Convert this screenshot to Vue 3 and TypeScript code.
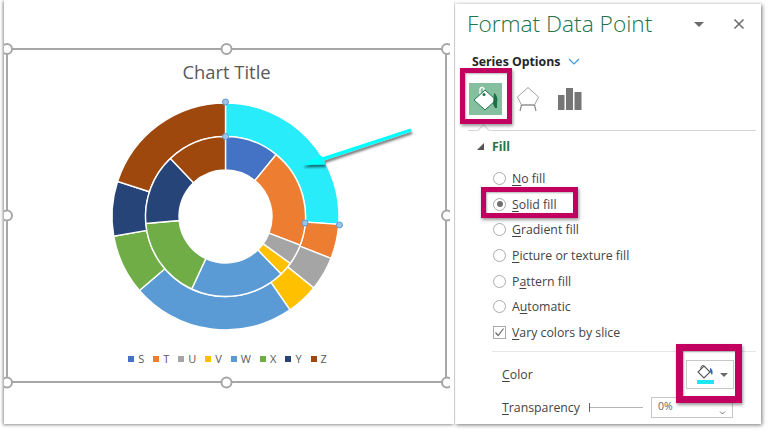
<script setup lang="ts">
interface Slice { from: number; to: number; color: string }
const C = { s: '#4472c4', t: '#ed7d31', u: '#a5a5a5', v: '#ffc000', w: '#5b9bd5', x: '#70ad47', y: '#264478', z: '#9e480e' }
const cx = 225.5
const cy = 216.5
function pt(r: number, a: number): string {
  const t = (a * Math.PI) / 180
  return `${(cx + r * Math.sin(t)).toFixed(2)} ${(cy - r * Math.cos(t)).toFixed(2)}`
}
function arc(r0: number, r1: number, s: Slice): string {
  const large = s.to - s.from > 180 ? 1 : 0
  return `M${pt(r1, s.from)}A${r1} ${r1} 0 ${large} 1 ${pt(r1, s.to)}L${pt(r0, s.to)}A${r0} ${r0} 0 ${large} 0 ${pt(r0, s.from)}Z`
}
const outer: Slice[] = [
  { from: 0, to: 94, color: '#29ecfb' },
  { from: 94, to: 111.7, color: C.t },
  { from: 111.7, to: 129, color: C.u },
  { from: 129, to: 145.4, color: C.v },
  { from: 145.4, to: 229.3, color: C.w },
  { from: 229.3, to: 260, color: C.x },
  { from: 260, to: 288, color: C.y },
  { from: 288, to: 360, color: C.z },
]
const inner: Slice[] = [
  { from: 0, to: 39.3, color: C.s },
  { from: 39.3, to: 111, color: C.t },
  { from: 111, to: 126, color: C.u },
  { from: 126, to: 136, color: C.v },
  { from: 136, to: 205, color: C.w },
  { from: 205, to: 265, color: C.x },
  { from: 265, to: 316.5, color: C.y },
  { from: 316.5, to: 360, color: C.z },
]
const rings = [
  ...outer.map((s) => ({ d: arc(80, 113.5, s), color: s.color })),
  ...inner.map((s) => ({ d: arc(46.5, 80, s), color: s.color })),
]
const legend = [
  { k: 'S', c: C.s }, { k: 'T', c: C.t }, { k: 'U', c: C.u }, { k: 'V', c: C.v },
  { k: 'W', c: C.w }, { k: 'X', c: C.x }, { k: 'Y', c: C.y }, { k: 'Z', c: C.z },
]
const frameHandles = [
  [7, 49], [226.5, 49], [447, 49], [7, 215.5], [447, 215.5], [7, 382.5], [226.5, 382.5], [447, 382.5],
]
const pointHandles = [[225.5, 102], [225.5, 136.5], [305, 223], [339.5, 225]]
const options = [
  { pre: '', key: 'N', post: 'o fill', on: false },
  { pre: '', key: 'S', post: 'olid fill', on: true },
  { pre: '', key: 'G', post: 'radient fill', on: false },
  { pre: '', key: 'P', post: 'icture or texture fill', on: false },
  { pre: 'P', key: 'a', post: 'ttern fill', on: false },
  { pre: 'A', key: 'u', post: 'tomatic', on: false },
]
</script>

<template>
  <div class="root">
    <section class="sheet">
      <div class="frame">
        <h2 class="title">Chart Title</h2>
        <div class="legend">
          <span v-for="l in legend" :key="l.k" class="legend-item">
            <i class="swatch" :style="{ background: l.c }"></i>{{ l.k }}
          </span>
        </div>
      </div>
      <svg class="chart" width="450" height="424" viewBox="0 0 450 424">
        <defs>
          <filter id="sh" x="-20%" y="-40%" width="140%" height="200%">
            <feDropShadow dx="1" dy="2.5" stdDeviation="1.2" flood-color="#000" flood-opacity="0.55" />
          </filter>
        </defs>
        <path v-for="(r, i) in rings" :key="i" :d="r.d" :fill="r.color" stroke="#fff" stroke-width="1.4" />
        <g filter="url(#sh)">
          <path d="M410.5 128.5L322.5 157.2L321 155.5L302 165L325 164.5L324 160.5L411.5 131.5Z" fill="#00ffff" />
        </g>
        <circle v-for="(h, i) in pointHandles" :key="'p' + i" :cx="h[0]" :cy="h[1]" r="3" fill="#9dc3e6" stroke="#5b9bd5" />
        <circle v-for="(h, i) in frameHandles" :key="'f' + i" :cx="h[0]" :cy="h[1]" r="5" fill="#fff" stroke="#a6a6a6" stroke-width="2" />
      </svg>
    </section>

    <aside class="pane">
      <header class="pane-head">
        <h1 class="pane-title">Format Data Point</h1>
        <span class="caret"></span>
        <svg class="close" width="12" height="12" viewBox="0 0 12 12">
          <path d="M1.5 1.5L10.5 10.5M10.5 1.5L1.5 10.5" stroke="#6a6a6a" stroke-width="1.5" fill="none" />
        </svg>
      </header>

      <div class="series">
        <span>Series Options</span>
        <svg width="12" height="7" viewBox="0 0 12 7">
          <path d="M1 1L6 6L11 1" stroke="#3f9be0" stroke-width="1.2" fill="none" />
        </svg>
      </div>

      <div class="tabs">
        <div class="tab active">
          <svg width="33" height="32" viewBox="0 0 33 32">
            <path d="M11 11V6.5a2 2 0 0 1 4 0V11" fill="none" stroke="#fff" stroke-width="1.3" />
            <path d="M16 7L27 17L16 27L5 17Z" fill="#fff" stroke="#1d7a4c" stroke-width="1" />
            <circle cx="15" cy="11.5" r="1.5" fill="#1d6f45" />
            <path d="M25 10C28 12 29 16 28 20V25H26L24 21Z" fill="#1d6f45" />
          </svg>
        </div>
        <div class="tab">
          <svg width="24" height="26" viewBox="0 0 24 26">
            <path d="M12 1.5L22.5 11L18.5 19H5.5L1.5 11Z" fill="#fff" stroke="#a0a0a0" stroke-width="1" />
            <path d="M6 19H18M5.5 19L4 25M18.5 19L20 25" stroke="#8a8a8a" stroke-width="1.2" fill="none" />
          </svg>
        </div>
        <div class="tab">
          <svg width="24" height="24" viewBox="0 0 24 24">
            <path d="M0 8H6.5V23H0ZM8 1H15V23H8ZM16.5 5H23.5V23H16.5Z" fill="#767676" />
          </svg>
        </div>
      </div>
      <div class="rule">
        <span class="notch"></span>
      </div>

      <div class="fill-head">
        <span class="tri"></span>
        <span>Fill</span>
      </div>

      <ul class="opts">
        <li v-for="o in options" :key="o.key + o.post" class="opt">
          <span class="radio" :class="{ on: o.on }"></span>
          <span>{{ o.pre }}<u>{{ o.key }}</u>{{ o.post }}</span>
        </li>
        <li class="opt">
          <span class="check">
            <svg width="11" height="11" viewBox="0 0 11 11">
              <path d="M1.5 5.5L4.2 8.5L9.5 1.5" stroke="#6a6a6a" stroke-width="1.2" fill="none" />
            </svg>
          </span>
          <span><u>V</u>ary colors by slice</span>
        </li>
      </ul>

      <div class="rule sub"></div>

      <div class="prop color-row">
        <span><u>C</u>olor</span>
        <div class="color-btn">
          <span class="bucket">
            <svg width="18" height="14" viewBox="0 0 18 14">
              <path d="M8 1L14 7L8 13L2 7Z" fill="#fff" stroke="#555" stroke-width="1.1" />
              <path d="M5 4V2a2 2 0 0 1 3 -1" fill="none" stroke="#555" stroke-width="1" />
              <path d="M14 3C17 4 17 8 16 10L14 7Z" fill="#2a6fb8" />
            </svg>
            <i class="bar"></i>
          </span>
          <span class="caret small"></span>
        </div>
      </div>

      <div class="prop trans-row">
        <span><u>T</u>ransparency</span>
        <div class="slider"><i></i></div>
        <div class="spin">
          <span>0%</span>
          <svg width="7" height="4" viewBox="0 0 7 4"><path d="M1 .5L3.5 3L6 .5" stroke="#777" fill="none" /></svg>
        </div>
      </div>
    </aside>

    <div class="mark m1"></div>
    <div class="mark m2"></div>
    <div class="mark m3"></div>
  </div>
</template>

<style>
html, body { margin: 0; padding: 0; background: #fff; overflow: hidden; }
</style>

<style scoped>
.root {
  position: relative;
  width: 768px;
  height: 432px;
  display: flex;
  align-items: flex-start;
  background: #fff;
  overflow: hidden;
  padding-left: 4px;
  box-sizing: border-box;
  font-family: "Open Sans", "Noto Sans", sans-serif;
}
.sheet {
  position: relative;
  width: 450px;
  height: 424px;
  flex: none;
  background: #fff;
  box-shadow: -1px 1px 3px rgba(0, 0, 0, 0.45);
  overflow: hidden;
  box-sizing: border-box;
  padding: 48px 6px 0 2px;
}
.frame {
  height: 335px;
  width: 441px;
  box-sizing: border-box;
  border: 2px solid #a6a6a6;
  display: flex;
  flex-direction: column;
  justify-content: space-between;
  align-items: center;
}
.chart { position: absolute; left: -4px; top: 0; }
.title {
  margin: 10px 0 0;
  font-size: 18.4px;
  font-weight: 400;
  line-height: 24px;
  color: #595959;
}
.legend {
  display: flex;
  gap: 9px;
  margin: 0 0 14px 2px;
  font-size: 11px;
  line-height: 16px;
  color: #595959;
}
.legend-item { display: flex; align-items: center; gap: 4px; }
.swatch { width: 6px; height: 6px; display: block; }
.pane {
  width: 306px;
  height: 420px;
  margin-top: 4px;
  margin-left: 1px;
  flex: none;
  background: #fff;
  box-shadow: 1px 1px 4px rgba(0, 0, 0, 0.55);
  box-sizing: border-box;
  padding: 0 5px 0 13px;
  overflow: hidden;
}
.pane-head { display: flex; align-items: center; height: 40px; }
.pane-title {
  margin: 0 0 0 -1px;
  font-size: 22.7px;
  font-weight: 300;
  color: #217346;
  line-height: 40px;
  flex: 1;
}
.caret {
  width: 0;
  height: 0;
  border-left: 5px solid transparent;
  border-right: 5px solid transparent;
  border-top: 5px solid #6a6a6a;
  margin-right: 29px;
}
.close { margin-right: 11px; }
.series {
  display: flex;
  align-items: center;
  gap: 8px;
  height: 20px;
  margin: 7px 0 0 4px;
  font-size: 12.3px;
  font-weight: 700;
  color: #262626;
}
.tabs {
  display: flex;
  align-items: center;
  height: 34px;
  margin: 11px 0 0 1px;
}
.tab {
  display: flex;
  align-items: center;
  justify-content: center;
  width: 33px;
  height: 32px;
  margin-right: 9px;
}
.tab.active { background: #86bf9f; }
.rule {
  position: relative;
  height: 1px;
  margin: 14px 0 0;
  background: #d4d4d4;
}
.notch {
  position: absolute;
  left: 11px;
  top: -4px;
  width: 8px;
  height: 8px;
  background: #fff;
  border-left: 1px solid #d4d4d4;
  border-top: 1px solid #d4d4d4;
  transform: rotate(45deg);
}
.fill-head {
  display: flex;
  align-items: center;
  gap: 8px;
  height: 20px;
  margin: 5px 0 0 9px;
  font-size: 12.3px;
  font-weight: 700;
  color: #217346;
}
.tri {
  width: 0;
  height: 0;
  border-left: 7px solid transparent;
  border-bottom: 7px solid #555;
}
.opts { list-style: none; margin: 10px 0 0; padding: 0 0 0 25px; }
.opt {
  display: flex;
  align-items: center;
  gap: 6px;
  height: 25.6px;
  font-size: 12.3px;
  color: #444;
}
.opt u, .prop u { text-underline-offset: 2px; }
.radio {
  width: 13px;
  height: 13px;
  box-sizing: border-box;
  border: 1px solid #ababab;
  border-radius: 50%;
  position: relative;
  flex: none;
}
.radio.on::after {
  content: "";
  position: absolute;
  left: 2.5px;
  top: 2.5px;
  width: 6px;
  height: 6px;
  border-radius: 50%;
  background: #707070;
}
.check {
  width: 13px;
  height: 13px;
  box-sizing: border-box;
  border: 1px solid #ababab;
  display: flex;
  align-items: center;
  justify-content: center;
  flex: none;
}
.rule.sub { margin: 6px 0 0 24px; background: #e6e6e6; height: 1px; }
.prop {
  display: flex;
  align-items: center;
  padding-left: 34px;
  font-size: 12.3px;
  color: #444;
}
.color-row { height: 29px; margin-top: 8px; justify-content: space-between; }
.color-btn {
  width: 48px;
  height: 29px;
  box-sizing: border-box;
  border: 1px solid #c6c6c6;
  display: flex;
  align-items: center;
  justify-content: center;
  gap: 6px;
  margin-right: 22px;
  padding-left: 4px;
}
.bucket { display: flex; flex-direction: column; align-items: center; gap: 1px; }
.bar { display: block; width: 17px; height: 4px; background: #1fe6f2; }
.caret.small { margin: 0; border-left-width: 4px; border-right-width: 4px; border-top-width: 4px; }
.trans-row { margin-top: 8px; height: 21px; }
.slider {
  position: relative;
  width: 54px;
  height: 1px;
  background: #b5b5b5;
  margin-left: 9px;
}
.slider i {
  position: absolute;
  left: 0;
  top: -4px;
  width: 1px;
  height: 9px;
  background: #666;
}
.spin {
  position: relative;
  width: 82px;
  height: 21px;
  box-sizing: border-box;
  border: 1px solid #c6c6c6;
  margin-left: 8px;
  font-size: 10.5px;
  line-height: 17px;
  padding-left: 6px;
  color: #666;
}
.spin svg { position: absolute; right: 6px; bottom: 2px; }
.mark {
  position: absolute;
  box-sizing: border-box;
  border: 5px solid #c2005f;
  box-shadow: 1px 2px 3px rgba(0, 0, 0, 0.4), inset 1px 1px 2px rgba(0, 0, 0, 0.3);
}
.m1 { left: 460px; top: 68px; width: 52px; height: 56px; }
.m2 { left: 481px; top: 187px; width: 97px; height: 31px; }
.m3 { left: 676px; top: 344px; width: 66px; height: 59px; border-width: 7px; }
</style>
